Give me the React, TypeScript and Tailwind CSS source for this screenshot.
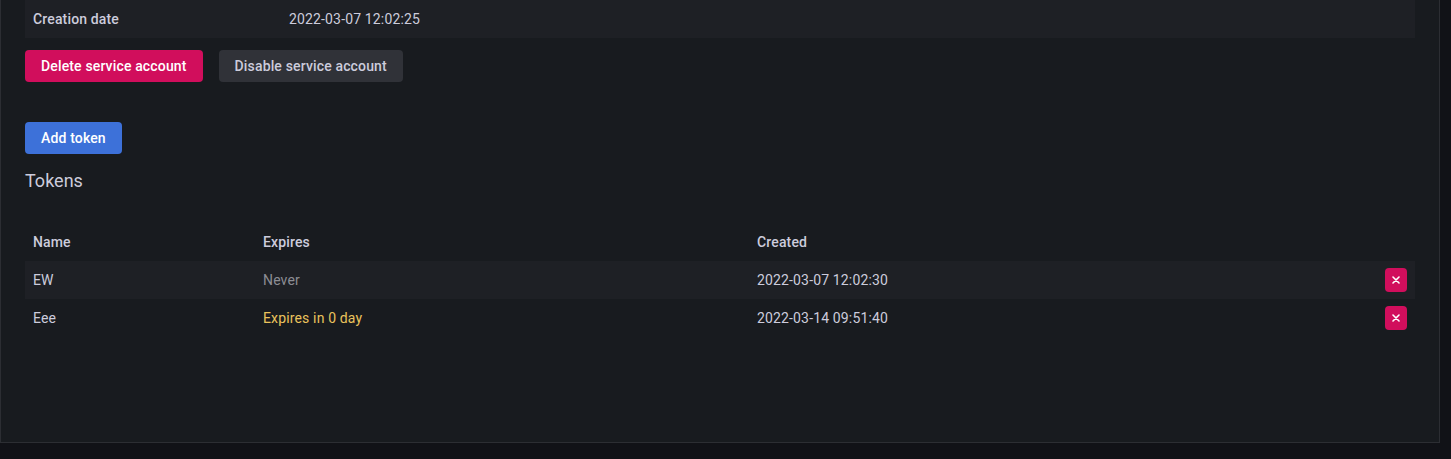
const tokens = [
  { name: 'EW', expires: 'Never', soon: false, created: '2022-03-07 12:02:30' },
  { name: 'Eee', expires: 'Expires in 0 day', soon: true, created: '2022-03-14 09:51:40' },
]

const App = () => {
  return (
    <div className="min-h-screen bg-[#111217] text-[#ccccdc] text-sm tracking-[0.01071em]" style={{ fontFamily: 'Roboto, "Liberation Sans", sans-serif' }}>
      <div className="w-[1440px] h-[443px] bg-[#181b1f] border-l border-r border-b border-[#2c2e33] px-6">
        <div className="flex items-center h-[38px] bg-[#1e2025] px-2">
          <div className="w-[256px] font-medium">Creation date</div>
          <div>2022-03-07 12:02:25</div>
        </div>
        <div className="flex gap-4 mt-3">
          <button className="h-8 px-4 rounded-sm bg-[#d10e5c] text-white font-medium">
            Delete service account
          </button>
          <button className="h-8 px-4 rounded-sm bg-[#303238] text-[#ccccdc] font-medium">
            Disable service account
          </button>
        </div>
        <button className="mt-10 h-8 px-4 rounded-sm bg-[#3d71d9] text-white font-medium">
          Add token
        </button>
        <h3 className="mt-[13px] text-lg leading-[27px] font-normal tracking-normal">Tokens</h3>
        <table className="mt-[29px] w-full border-collapse">
          <thead>
            <tr className="h-[38px] text-left font-medium">
              <th className="w-[230px] px-2 font-medium">Name</th>
              <th className="w-[494px] px-2 font-medium">Expires</th>
              <th className="px-2 font-medium">Created</th>
              <th className="w-[38px]"></th>
            </tr>
          </thead>
          <tbody>
            {tokens.map((t, i) => (
              <tr key={t.name} className={'h-[38px] ' + (i % 2 === 0 ? 'bg-[#1e2025]' : '')}>
                <td className="px-2">{t.name}</td>
                <td className={'px-2 ' + (t.soon ? 'text-[#eac35c]' : 'text-[#8c8d94]')}>{t.expires}</td>
                <td className="px-2">{t.created}</td>
                <td className="pr-2 text-right">
                  <button className="w-[22px] h-6 inline-flex items-center justify-center rounded-sm bg-[#d10e5c] text-white align-middle">
                    <svg width="8" height="8" viewBox="0 0 8 8">
                      <path d="M1 1L7 7M7 1L1 7" stroke="white" strokeWidth="1.6" strokeLinecap="round" />
                    </svg>
                  </button>
                </td>
              </tr>
            ))}
          </tbody>
        </table>
      </div>
    </div>
  )
}

export default App
